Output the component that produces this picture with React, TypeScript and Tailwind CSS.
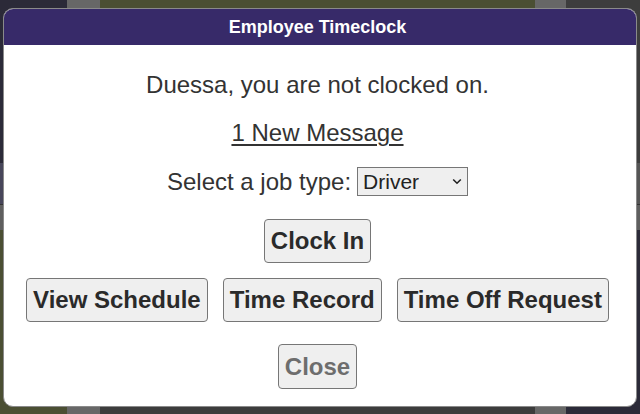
import React from "react";

const btn =
  "h-[44px] px-[6px] bg-[#efefef] border border-[#767676] rounded-[4px] text-[24px] font-bold leading-[28px] text-[#2a2a2a] whitespace-nowrap";

export default function App() {
  return (
    <div
      className="relative w-[640px] h-[414px] overflow-hidden"
      style={{ fontFamily: '"Liberation Sans", Arial, sans-serif' }}
    >
      {/* dimmed page behind the dialog */}
      <div className="grid grid-cols-[67px_33px_435px_31px_1fr] grid-rows-[163px_42px_25px_1fr] h-full">
        <div className="bg-[#2b2a38]" />
        <div className="bg-[#676767]" />
        <div className="bg-[#4b4f33]" />
        <div className="bg-[#676767]" />
        <div className="bg-[#3d3d3d]" />

        <div className="bg-[#47465a] border-b border-[#333]" />
        <div className="bg-[#555555] border-b border-[#333]" />
        <div className="bg-[#555555] border-b border-[#333]" />
        <div className="bg-[#555555] border-b border-[#333]" />
        <div className="bg-[#555555] border-b border-[#333]" />

        <div className="bg-[#5f5f5f]" />
        <div className="bg-[#5f5f5f]" />
        <div className="bg-[#5f5f5f]" />
        <div className="bg-[#5f5f5f]" />
        <div className="bg-[#5f5f5f]" />

        <div className="bg-[#4b4f33]" />
        <div className="bg-[#676767]" />
        <div className="bg-[#3c3c3c]" />
        <div className="bg-[#676767]" />
        <div className="bg-[#2b2a38]" />
      </div>

      {/* dialog */}
      <div className="absolute left-[3px] top-[8px] w-[634px] h-[399px] bg-white border border-[#8a8a8a] rounded-[10px] overflow-hidden flex flex-col">
        <div className="h-[36px] shrink-0 bg-[#372a69] flex items-center justify-center pr-[5px]">
          <span className="text-white text-[18px] font-bold leading-[20px]">
            Employee Timeclock
          </span>
        </div>

        <div className="flex flex-col items-center pr-[5px] text-[#333333]">
          <p className="mt-[26px] text-[24px] leading-[28px]">
            Duessa, you are not clocked on.
          </p>
          <a className="mt-[20px] text-[24px] leading-[28px] underline underline-offset-[3px] decoration-[1.5px] cursor-pointer">
            1 New Message
          </a>
          <div className="mt-[20px] h-[29px] flex items-center gap-[6px]">
            <span className="text-[24px] leading-[28px]">Select a job type:</span>
            <div className="relative">
              <select
                defaultValue="Driver"
                className="appearance-none w-[111px] h-[29px] bg-[#efefef] border border-[#767676] pl-[5px] text-[21px] leading-[24px] text-[#222] outline-none"
              >
                <option>Driver</option>
                <option>Warehouse</option>
                <option>Office</option>
              </select>
              <svg
                className="absolute right-[6px] top-[11px] pointer-events-none"
                width="10"
                height="7"
                viewBox="0 0 10 7"
                fill="none"
              >
                <path d="M1.2 1.5 L5 5.2 L8.8 1.5" stroke="#222" strokeWidth="1.6" />
              </svg>
            </div>
          </div>

          <button className={`${btn} mt-[23px]`}>Clock In</button>

          <div className="mt-[15px] flex gap-[15px]">
            <button className={btn}>View Schedule</button>
            <button className={btn}>Time Record</button>
            <button className={btn}>Time Off Request</button>
          </div>

          <button className={`${btn} mt-[22px] h-[45px] text-[#6d6d6d]`}>Close</button>
        </div>
      </div>
    </div>
  );
}
